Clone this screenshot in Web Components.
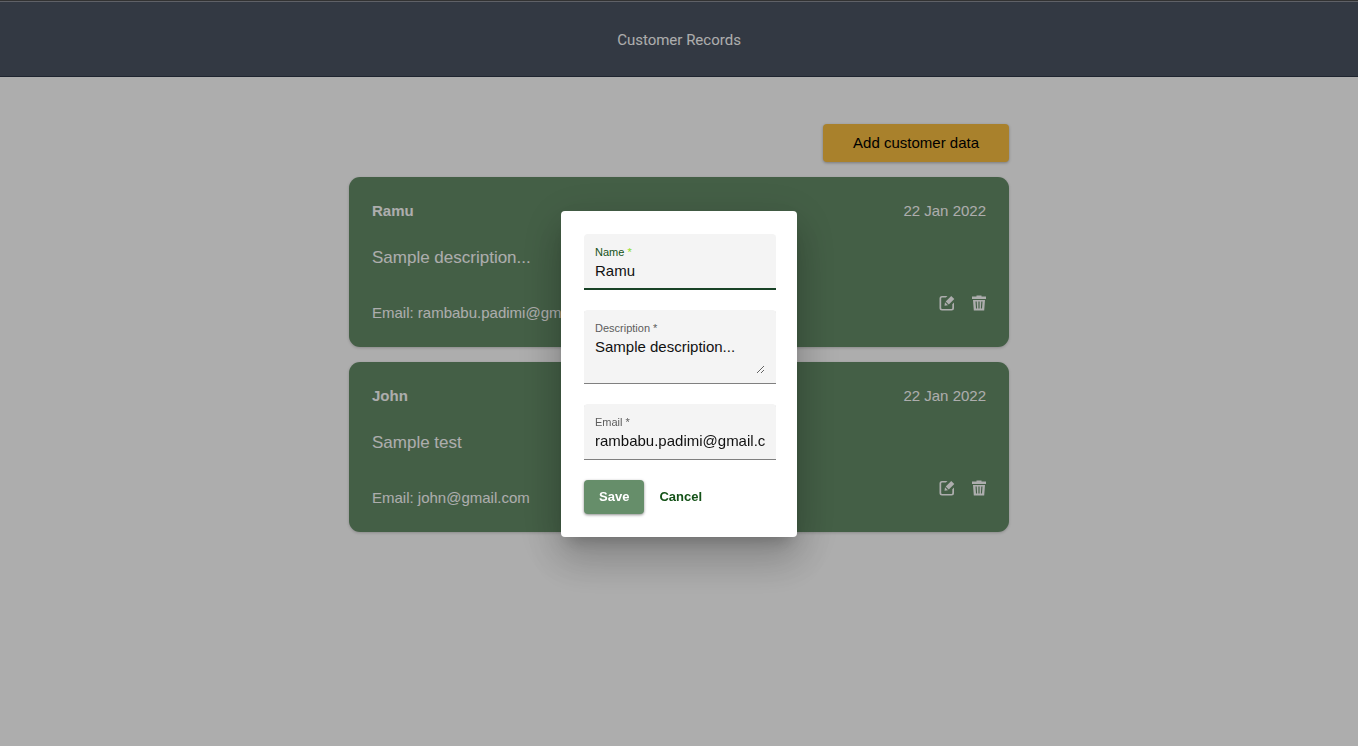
<!DOCTYPE html>
<html lang="en">
<head>
<meta charset="utf-8">
<meta name="viewport" content="width=device-width, initial-scale=1">
<title>Customer Records</title>
<style>
    body {
        margin: 0;
        background: #ffffff;
        font-family: "Liberation Sans", Arial, sans-serif;
        font-size: 15px;
        --card-color: #658d68;
        --primary-color: #145218;
        --accent-color: #f9be41;
    }
</style>
</head>
<body>
<app-header>Customer Records</app-header>
<customer-list>
    <add-button slot="actions">Add customer data</add-button>
    <customer-card name="Ramu" date="22 Jan 2022" email="rambabu.padimi@gmail.com">Sample description...</customer-card>
    <customer-card name="John" date="22 Jan 2022" email="john@gmail.com">Sample test</customer-card>
</customer-list>
<customer-dialog>
    <form-field label="Name" value="Ramu" active></form-field>
    <form-field label="Description" value="Sample description..." multiline></form-field>
    <form-field label="Email" value="rambabu.padimi@gmail.com" type="email"></form-field>
</customer-dialog>

<script>
    function render(element, html) {
        const template = document.createElement('template');
        template.innerHTML = html;
        element.attachShadow({ mode: 'open' });
        element.shadowRoot.appendChild(template.content.cloneNode(true));
    }

    class AppHeader extends HTMLElement {
        constructor() {
            super();
            render(this, `
                <style>
                    :host {
                        display: block;
                        border-top: 1px solid #4b4b4b;
                    }
                    header {
                        display: flex;
                        align-items: center;
                        justify-content: center;
                        padding: 26px 16px 24px;
                        border-top: 1px solid #8c8f99;
                        border-bottom: 1px solid #2f3747;
                        background: #4c5564;
                        color: #ffffff;
                    }
                    h1 {
                        margin: 0;
                        font: 400 15px/24px Roboto, sans-serif;
                    }
                </style>
                <header><h1><slot></slot></h1></header>
            `);
        }
    }

    class CustomerList extends HTMLElement {
        constructor() {
            super();
            render(this, `
                <style>
                    :host {
                        display: block;
                        padding: 47px 16px;
                    }
                    main {
                        display: flex;
                        flex-direction: column;
                        gap: 15px;
                        max-width: 660px;
                        margin: 0 auto;
                    }
                    .actions {
                        display: flex;
                        justify-content: flex-end;
                    }
                </style>
                <main>
                    <div class="actions"><slot name="actions"></slot></div>
                    <slot></slot>
                </main>
            `);
        }
    }

    class AddButton extends HTMLElement {
        constructor() {
            super();
            render(this, `
                <style>
                    :host {
                        display: block;
                    }
                    button {
                        display: block;
                        padding: 8px 30px;
                        border: 0;
                        border-radius: 4px;
                        background: var(--accent-color);
                        color: #000000;
                        font: inherit;
                        line-height: 22px;
                        box-shadow: 0 1px 3px rgba(0, 0, 0, 0.3);
                        cursor: pointer;
                    }
                </style>
                <button type="button"><slot></slot></button>
            `);
        }
    }

    class CustomerCard extends HTMLElement {
        constructor() {
            super();
            render(this, `
                <style>
                    :host {
                        display: block;
                    }
                    article {
                        padding: 23px;
                        border-radius: 11px;
                        background: var(--card-color);
                        color: #ffffff;
                        line-height: 22px;
                        box-shadow: 0 1px 3px rgba(0, 0, 0, 0.2);
                    }
                    .top {
                        display: flex;
                        justify-content: space-between;
                    }
                    h2, p {
                        margin: 0;
                        font-size: 15px;
                    }
                    .description {
                        margin: 25px 0 24px;
                        font-size: 17px;
                    }
                    .bottom {
                        display: flex;
                        justify-content: space-between;
                        min-height: 31px;
                    }
                    .email {
                        align-self: flex-end;
                    }
                    .tools {
                        display: flex;
                        align-items: flex-start;
                        gap: 17px;
                    }
                    button {
                        display: flex;
                        align-items: center;
                        height: 20px;
                        padding: 0;
                        border: 0;
                        background: none;
                        color: inherit;
                        cursor: pointer;
                    }
                </style>
                <article>
                    <div class="top">
                        <h2></h2>
                        <time></time>
                    </div>
                    <p class="description"><slot></slot></p>
                    <div class="bottom">
                        <p class="email">Email: <span class="address"></span></p>
                        <div class="tools">
                            <button type="button" aria-label="Edit">
                                <svg width="16" height="16" viewBox="0 0 16 16" fill="currentColor">
                                    <path d="M8.500 1H3Q.5 1 .5 3.500V13Q.5 15.500 3 15.500H12.500Q15 15.500 15 13V7.500L13.300 9.200V13Q13.300 13.900 12.400 13.900H3.100Q2.200 13.900 2.200 13V3.500Q2.200 2.600 3.100 2.600H6.900Z"/>
                                    <path d="M12.200 1 15.300 4.100 9.800 9.600 6.700 6.500ZM6 7.300 9 10.300 5.500 10.800Z"/>
                                </svg>
                            </button>
                            <button type="button" aria-label="Delete">
                                <svg width="14" height="16" viewBox="0 0 14 16" fill="currentColor">
                                    <path d="M4.500 1.500V.5H9.500V1.500H14V4H0V1.500Z"/>
                                    <path fill-rule="evenodd" d="M1 5H13L12.200 15.500H1.800ZM3.500 6.500 4 13.500H5.100L4.700 6.500ZM6.400 6.500V13.500H7.600V6.500ZM9.300 6.500 8.900 13.500H10L10.500 6.500Z"/>
                                </svg>
                            </button>
                        </div>
                    </div>
                </article>
            `);
        }

        connectedCallback() {
            this.shadowRoot.querySelector('h2').textContent = this.getAttribute('name');
            this.shadowRoot.querySelector('time').textContent = this.getAttribute('date');
            this.shadowRoot.querySelector('.address').textContent = this.getAttribute('email');
        }
    }

    class FormField extends HTMLElement {
        constructor() {
            super();
            const control = this.hasAttribute('multiline')
                ? '<textarea id="control" required></textarea>'
                : '<input id="control" required>';
            render(this, `
                <style>
                    :host {
                        display: block;
                    }
                    .field {
                        padding: 11px 11px 8px;
                        border-radius: 4px 4px 0 0;
                        background: #f4f4f4;
                        box-shadow: inset 0 -1px #808080;
                    }
                    :host([multiline]) .field {
                        padding-bottom: 10px;
                    }
                    :host([active]) .field {
                        box-shadow: inset 0 -2px #184226;
                    }
                    label {
                        display: block;
                        color: #5c5c5c;
                        font-size: 11px;
                        line-height: 15px;
                    }
                    :host([active]) label {
                        color: var(--primary-color);
                    }
                    :host([active]) .mark {
                        color: #8fe01c;
                    }
                    input, textarea {
                        display: block;
                        box-sizing: border-box;
                        width: 100%;
                        height: 22px;
                        margin: 0;
                        padding: 0;
                        border: 0;
                        outline: 0;
                        background: none;
                        color: #111111;
                        font: inherit;
                        line-height: 22px;
                    }
                    textarea {
                        height: 38px;
                        overflow: hidden;
                        resize: vertical;
                    }
                </style>
                <div class="field">
                    <label for="control"><span class="text"></span> <span class="mark">*</span></label>
                    ${control}
                </div>
            `);
        }

        connectedCallback() {
            const control = this.shadowRoot.querySelector('#control');
            this.shadowRoot.querySelector('.text').textContent = this.getAttribute('label');
            if (this.hasAttribute('type')) {
                control.type = this.getAttribute('type');
            }
            control.value = this.getAttribute('value') || '';
        }
    }

    class CustomerDialog extends HTMLElement {
        constructor() {
            super();
            render(this, `
                <style>
                    :host {
                        position: fixed;
                        inset: 0;
                        z-index: 1000;
                        display: flex;
                        align-items: center;
                        justify-content: center;
                        box-sizing: border-box;
                        padding-top: 2px;
                        background: rgba(0, 0, 0, 0.32);
                    }
                    form {
                        display: flex;
                        flex-direction: column;
                        gap: 20px;
                        box-sizing: border-box;
                        width: 236px;
                        padding: 23px 21px 23px 23px;
                        border-radius: 4px;
                        background: #ffffff;
                        box-shadow: 0 11px 15px -7px rgba(0, 0, 0, 0.2),
                            0 24px 38px 3px rgba(0, 0, 0, 0.14),
                            0 9px 46px 8px rgba(0, 0, 0, 0.12);
                    }
                    .buttons {
                        display: flex;
                    }
                    button {
                        padding: 0 15px;
                        border: 0;
                        border-radius: 4px;
                        background: none;
                        color: var(--primary-color);
                        font: inherit;
                        font-size: 13px;
                        font-weight: 700;
                        line-height: 34px;
                        cursor: pointer;
                    }
                    .save {
                        background: #668e6a;
                        color: #ffffff;
                        box-shadow: 0 1px 3px rgba(0, 0, 0, 0.45);
                    }
                </style>
                <form role="dialog" aria-label="Customer" novalidate>
                    <slot></slot>
                    <div class="buttons">
                        <button class="save" type="submit">Save</button>
                        <button class="cancel" type="button">Cancel</button>
                    </div>
                </form>
            `);

            this.shadowRoot.querySelector('form').addEventListener('submit', (event) => {
                event.preventDefault();
                this.remove();
            });
            this.shadowRoot.querySelector('.cancel').addEventListener('click', () => this.remove());
        }
    }

    customElements.define('app-header', AppHeader);
    customElements.define('customer-list', CustomerList);
    customElements.define('add-button', AddButton);
    customElements.define('customer-card', CustomerCard);
    customElements.define('form-field', FormField);
    customElements.define('customer-dialog', CustomerDialog);
</script>
</body>
</html>
